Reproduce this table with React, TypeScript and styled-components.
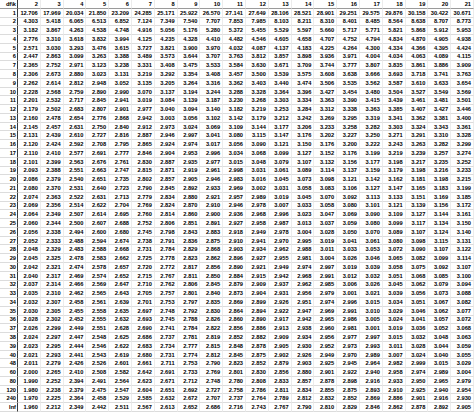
import { Fragment } from "react";
import styled, { createGlobalStyle } from "styled-components";

const GlobalStyle = createGlobalStyle`
  html, body {
    margin: 0;
    padding: 0;
    background: #fff;
  }
`;

const ks = [2, 3, 4, 5, 6, 7, 8, 9, 10, 11, 12, 13, 14, 15, 16, 17, 18, 19, 20, 21];

// two-sided critical values, alpha = 0.05
const rows: [string, string][] = [
  ["1", "12.706 17.969 20.034 21.850 23.209 24.285 25.171 25.922 26.570 27.141 27.649 28.106 28.521 28.901 29.251 29.575 29.876 30.158 30.422 30.671"],
  ["2", "4.303 5.418 6.065 6.513 6.852 7.124 7.349 7.540 7.707 7.853 7.985 8.103 8.211 8.310 8.401 8.485 8.564 8.638 8.707 8.773"],
  ["3", "3.182 3.867 4.263 4.538 4.748 4.916 5.056 5.176 5.280 5.372 5.455 5.529 5.597 5.660 5.717 5.771 5.821 5.868 5.912 5.953"],
  ["4", "2.776 3.310 3.618 3.832 3.994 4.125 4.235 4.328 4.410 4.482 4.546 4.605 4.658 4.707 4.752 4.794 4.834 4.870 4.905 4.938"],
  ["5", "2.571 3.030 3.293 3.476 3.615 3.727 3.821 3.900 3.970 4.032 4.087 4.137 4.183 4.225 4.264 4.300 4.334 4.366 4.395 4.424"],
  ["6", "2.447 2.863 3.099 3.263 3.388 3.489 3.573 3.644 3.707 3.763 3.812 3.857 3.898 3.936 3.971 4.004 4.034 4.063 4.089 4.115"],
  ["7", "2.365 2.752 2.971 3.123 3.238 3.331 3.408 3.475 3.533 3.584 3.630 3.671 3.709 3.744 3.777 3.807 3.835 3.861 3.886 3.909"],
  ["8", "2.306 2.673 2.880 3.023 3.131 3.219 3.292 3.354 3.408 3.457 3.500 3.539 3.575 3.608 3.638 3.666 3.693 3.718 3.741 3.763"],
  ["9", "2.262 2.614 2.812 2.948 3.052 3.135 3.205 3.264 3.316 3.362 3.403 3.440 3.474 3.506 3.535 3.562 3.587 3.610 3.633 3.654"],
  ["10", "2.228 2.568 2.759 2.890 2.990 3.070 3.137 3.194 3.244 3.288 3.328 3.364 3.396 3.427 3.454 3.480 3.504 3.527 3.549 3.569"],
  ["11", "2.201 2.532 2.717 2.845 2.941 3.019 3.084 3.139 3.187 3.230 3.268 3.303 3.334 3.363 3.390 3.415 3.439 3.461 3.481 3.501"],
  ["12", "2.179 2.502 2.683 2.807 2.901 2.977 3.040 3.094 3.140 3.182 3.219 3.253 3.284 3.312 3.338 3.363 3.385 3.407 3.427 3.446"],
  ["13", "2.160 2.478 2.654 2.776 2.868 2.942 3.003 3.056 3.102 3.142 3.179 3.212 3.242 3.269 3.295 3.319 3.341 3.362 3.381 3.400"],
  ["14", "2.145 2.457 2.631 2.750 2.840 2.912 2.973 3.024 3.069 3.109 3.144 3.177 3.206 3.233 3.258 3.282 3.303 3.324 3.343 3.361"],
  ["15", "2.131 2.439 2.610 2.727 2.816 2.887 2.946 2.997 3.041 3.080 3.115 3.147 3.176 3.202 3.227 3.250 3.271 3.291 3.310 3.328"],
  ["16", "2.120 2.424 2.592 2.708 2.795 2.865 2.924 2.974 3.017 3.056 3.090 3.121 3.150 3.176 3.200 3.222 3.243 3.263 3.282 3.299"],
  ["17", "2.110 2.410 2.577 2.691 2.777 2.846 2.904 2.953 2.996 3.034 3.068 3.099 3.127 3.152 3.176 3.199 3.219 3.239 3.257 3.274"],
  ["18", "2.101 2.399 2.563 2.676 2.761 2.830 2.887 2.935 2.977 3.015 3.048 3.079 3.107 3.132 3.156 3.177 3.198 3.217 3.235 3.252"],
  ["19", "2.093 2.388 2.551 2.663 2.747 2.815 2.871 2.919 2.961 2.998 3.031 3.061 3.089 3.114 3.137 3.159 3.179 3.198 3.216 3.233"],
  ["20", "2.086 2.379 2.540 2.651 2.735 2.802 2.857 2.905 2.946 2.983 3.016 3.045 3.073 3.098 3.121 3.142 3.162 3.181 3.198 3.215"],
  ["21", "2.080 2.370 2.531 2.640 2.723 2.790 2.845 2.892 2.933 2.969 3.002 3.031 3.058 3.083 3.106 3.127 3.147 3.165 3.183 3.199"],
  ["22", "2.074 2.363 2.522 2.631 2.713 2.779 2.834 2.880 2.921 2.957 2.989 3.019 3.045 3.070 3.092 3.113 3.133 3.151 3.169 3.185"],
  ["23", "2.069 2.356 2.514 2.622 2.704 2.769 2.824 2.870 2.910 2.946 2.978 3.007 3.033 3.058 3.080 3.101 3.121 3.139 3.156 3.172"],
  ["24", "2.064 2.349 2.507 2.614 2.695 2.760 2.814 2.860 2.900 2.936 2.968 2.996 3.023 3.047 3.069 3.090 3.109 3.127 3.144 3.161"],
  ["25", "2.060 2.344 2.500 2.607 2.688 2.752 2.806 2.851 2.891 2.927 2.958 2.987 3.013 3.037 3.059 3.080 3.099 3.117 3.134 3.150"],
  ["26", "2.056 2.338 2.494 2.600 2.680 2.745 2.798 2.843 2.883 2.918 2.949 2.978 3.004 3.028 3.050 3.070 3.089 3.107 3.124 3.140"],
  ["27", "2.052 2.333 2.488 2.594 2.674 2.738 2.791 2.836 2.875 2.910 2.941 2.970 2.995 3.019 3.041 3.061 3.080 3.098 3.115 3.131"],
  ["28", "2.048 2.329 2.483 2.588 2.668 2.731 2.784 2.829 2.868 2.903 2.934 2.962 2.988 3.011 3.033 3.053 3.072 3.090 3.107 3.122"],
  ["29", "2.045 2.325 2.478 2.583 2.662 2.725 2.778 2.823 2.862 2.896 2.927 2.955 2.981 3.004 3.026 3.046 3.065 3.082 3.099 3.114"],
  ["30", "2.042 2.321 2.474 2.578 2.657 2.720 2.772 2.817 2.856 2.890 2.921 2.949 2.974 2.997 3.019 3.039 3.058 3.075 3.092 3.107"],
  ["31", "2.040 2.317 2.469 2.574 2.652 2.715 2.767 2.811 2.850 2.884 2.915 2.942 2.968 2.991 3.012 3.032 3.051 3.068 3.085 3.100"],
  ["32", "2.037 2.314 2.466 2.569 2.647 2.710 2.762 2.806 2.845 2.879 2.909 2.937 2.962 2.985 3.006 3.026 3.045 3.062 3.079 3.094"],
  ["33", "2.035 2.310 2.462 2.565 2.643 2.705 2.757 2.801 2.840 2.873 2.904 2.931 2.956 2.979 3.001 3.021 3.039 3.056 3.073 3.088"],
  ["34", "2.032 2.307 2.458 2.561 2.639 2.701 2.753 2.797 2.835 2.869 2.899 2.926 2.951 2.974 2.996 3.015 3.034 3.051 3.067 3.082"],
  ["35", "2.030 2.305 2.455 2.558 2.635 2.697 2.748 2.792 2.830 2.864 2.894 2.922 2.947 2.969 2.991 3.010 3.029 3.046 3.062 3.077"],
  ["36", "2.028 2.302 2.452 2.555 2.632 2.693 2.745 2.788 2.826 2.860 2.890 2.917 2.942 2.965 2.986 3.005 3.024 3.041 3.057 3.072"],
  ["37", "2.026 2.299 2.449 2.551 2.628 2.690 2.741 2.784 2.822 2.856 2.886 2.913 2.938 2.960 2.981 3.001 3.019 3.036 3.052 3.068"],
  ["38", "2.024 2.297 2.447 2.548 2.625 2.686 2.737 2.781 2.819 2.852 2.882 2.909 2.934 2.956 2.977 2.997 3.015 3.032 3.048 3.063"],
  ["39", "2.023 2.295 2.444 2.546 2.622 2.683 2.734 2.777 2.815 2.848 2.878 2.905 2.930 2.952 2.973 2.993 3.011 3.028 3.044 3.059"],
  ["40", "2.021 2.293 2.441 2.543 2.619 2.680 2.731 2.774 2.812 2.845 2.875 2.902 2.926 2.949 2.970 2.989 3.007 3.024 3.040 3.055"],
  ["48", "2.011 2.279 2.426 2.526 2.601 2.661 2.711 2.753 2.790 2.823 2.852 2.879 2.903 2.925 2.945 2.964 2.982 2.999 3.015 3.029"],
  ["60", "2.000 2.265 2.410 2.508 2.582 2.642 2.691 2.733 2.769 2.801 2.830 2.856 2.880 2.901 2.922 2.940 2.958 2.974 2.989 3.004"],
  ["80", "1.990 2.252 2.394 2.491 2.564 2.623 2.671 2.712 2.748 2.780 2.808 2.833 2.857 2.878 2.898 2.916 2.933 2.950 2.965 2.979"],
  ["120", "1.980 2.238 2.379 2.475 2.547 2.604 2.651 2.692 2.727 2.758 2.786 2.811 2.834 2.855 2.875 2.893 2.910 2.925 2.940 2.954"],
  ["240", "1.970 2.225 2.364 2.458 2.529 2.585 2.632 2.672 2.707 2.737 2.764 2.789 2.812 2.832 2.852 2.869 2.886 2.901 2.916 2.930"],
  ["Inf", "1.960 2.212 2.349 2.442 2.511 2.567 2.613 2.652 2.686 2.716 2.743 2.767 2.790 2.810 2.829 2.846 2.862 2.878 2.892 2.905"],
];

const Sheet = styled.div`
  display: grid;
  grid-template-columns: 18px repeat(20, 1fr);
  grid-auto-rows: calc(412px / 47);
  width: 474px;
  font-family: "Liberation Sans", Arial, sans-serif;
  font-weight: bold;
  font-size: 5.7px;
  color: #000;
`;

const Cell = styled.div<{ $head?: boolean; $label?: boolean }>`
  box-sizing: border-box;
  display: flex;
  align-items: center;
  justify-content: flex-end;
  padding-right: ${(p) => (p.$label ? "1px" : "2px")};
  white-space: nowrap;
  overflow: hidden;
  border-bottom: 1px solid ${(p) => (p.$head ? "#9a9a9a" : "#dcdcdc")};
  border-right: 1px solid ${(p) => (p.$label ? "#3a3a3a" : "#ececec")};
`;

export default function App() {
  return (
    <>
      <GlobalStyle />
      <Sheet>
        <Cell $head $label>
          df\k
        </Cell>
        {ks.map((k) => (
          <Cell key={k} $head>
            {k}
          </Cell>
        ))}
        {rows.map(([df, line]) => (
          <Fragment key={df}>
            <Cell $label>{df}</Cell>
            {line.split(" ").map((v, i) => (
              <Cell key={i}>{v}</Cell>
            ))}
          </Fragment>
        ))}
      </Sheet>
    </>
  );
}
